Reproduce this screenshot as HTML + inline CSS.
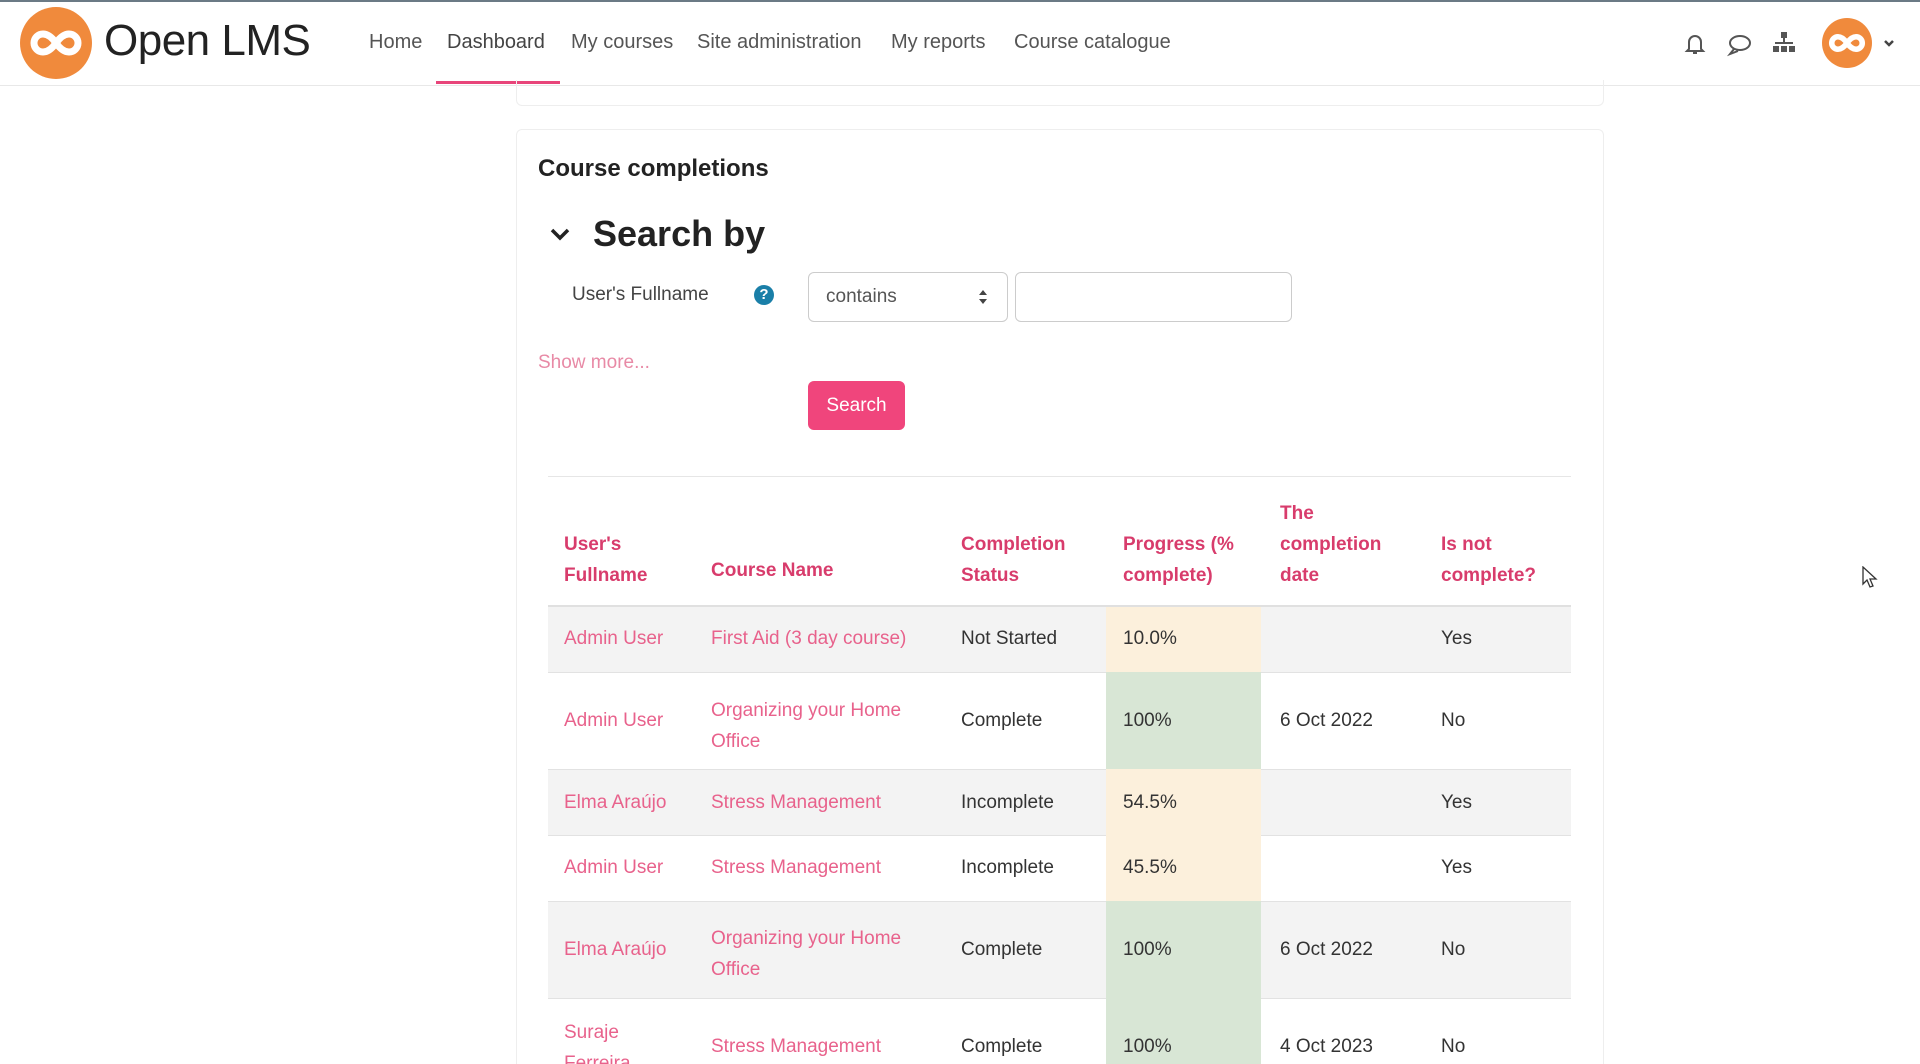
<!DOCTYPE html>
<html style="width:1920px;height:1064px;overflow:hidden"><head><meta charset="utf-8"><style>
*{margin:0;padding:0;box-sizing:border-box}
body{width:1920px;height:1064px;overflow:hidden;background:#fff;font-family:"Liberation Sans",sans-serif;color:#333;position:relative}
.a{position:absolute;white-space:nowrap}
.nav{position:absolute;left:0;top:0;width:1920px;height:86px;border-bottom:1px solid #e8e8e8;border-top:2px solid #6b7a85;background:#fff}
.nl{font-size:20px;color:#555;top:31px}
.l{color:#e8628c}
.h{color:#d83c6c;font-weight:bold;font-size:19px}
.c{font-size:19px}
.row{position:absolute;left:548px;width:1023px;border-top:1px solid #e2e2e2}
</style></head><body>
<div class="nav"></div>
<svg class="a" style="left:20px;top:7px" width="72" height="72" viewBox="0 0 72 72"><circle cx="36" cy="36" r="36" fill="#f08a3c"/><path d="M36 36c-5-7-9-9-13-9a9 9 0 0 0 0 18c4 0 8-2 13-9zm0 0c5 7 9 9 13 9a9 9 0 0 0 0-18c-4 0-8 2-13 9z" fill="none" stroke="#fff" stroke-width="7"/></svg>
<div class="a" style="left:104px;top:16px;font-size:44px;color:#222;letter-spacing:-0.5px">Open LMS</div>
<div class="a nl" style="left:369px">Home</div>
<div class="a nl" style="left:447px;color:#444">Dashboard</div>
<div class="a" style="left:436px;top:81px;width:124px;height:3px;background:#e8457a"></div>
<div class="a nl" style="left:571px">My courses</div>
<div class="a nl" style="left:697px">Site administration</div>
<div class="a nl" style="left:891px">My reports</div>
<div class="a nl" style="left:1014px">Course catalogue</div>
<svg class="a" style="left:1683px;top:32px" width="24" height="24" viewBox="0 0 24 24" fill="none" stroke="#555" stroke-width="2"><path d="M6 17V10a6 6 0 0 1 12 0v7l2 2H4z M10 21h4"/></svg>
<svg class="a" style="left:1726px;top:33px" width="26" height="24" viewBox="0 0 26 24" fill="none" stroke="#555" stroke-width="2"><ellipse cx="14" cy="10" rx="10" ry="7"/><path d="M8 16l-4 5 8-3"/></svg>
<svg class="a" style="left:1772px;top:32px" width="24" height="22" viewBox="0 0 24 22" fill="#555"><rect x="9" y="0" width="6" height="6"/><rect x="11" y="6" width="2" height="5"/><rect x="3" y="10" width="18" height="2"/><rect x="1" y="14" width="6" height="6"/><rect x="9" y="14" width="6" height="6"/><rect x="17" y="14" width="6" height="6"/></svg>
<svg class="a" style="left:1822px;top:18px" width="50" height="50" viewBox="0 0 72 72"><circle cx="36" cy="36" r="36" fill="#f08a3c"/><path d="M36 36c-5-7-9-9-13-9a9 9 0 0 0 0 18c4 0 8-2 13-9zm0 0c5 7 9 9 13 9a9 9 0 0 0 0-18c-4 0-8 2-13 9z" fill="none" stroke="#fff" stroke-width="8"/></svg>
<svg class="a" style="left:1883px;top:38px" width="12" height="10" viewBox="0 0 12 10"><path d="M2 3l4 4 4-4" fill="none" stroke="#444" stroke-width="2.5"/></svg>
<div class="a" style="left:516px;top:80px;width:1088px;height:26px;border:1px solid #eee;border-top:none;border-radius:0 0 6px 6px"></div>
<div class="a" style="left:516px;top:129px;width:1088px;height:935px;border:1px solid #eee;border-bottom:none;border-radius:6px 6px 0 0"></div>
<div class="a" style="left:538px;top:155px;font-size:24px;font-weight:bold;color:#222">Course completions</div>
<svg class="a" style="left:549px;top:226px" width="22" height="16" viewBox="0 0 22 16"><path d="M3 4l8 8 8-8" fill="none" stroke="#222" stroke-width="3.5"/></svg>
<div class="a" style="left:593px;top:213px;font-size:36px;font-weight:bold;color:#222">Search by</div>
<div class="a" style="left:572px;top:284px;font-size:19px;color:#444">User's Fullname</div>
<div class="a" style="left:754px;top:285px;width:20px;height:20px;border-radius:50%;background:#1a7fa8;color:#fff;font-size:15px;font-weight:bold;text-align:center;line-height:20px">?</div>
<div class="a" style="left:808px;top:272px;width:200px;height:50px;border:1px solid #ccc;border-radius:6px"></div>
<div class="a" style="left:826px;top:286px;font-size:19px;color:#555">contains</div>
<svg class="a" style="left:978px;top:289px" width="10" height="16" viewBox="0 0 10 16" fill="#444"><path d="M5 1l4 5H1zM5 15l4-5H1z"/></svg>
<div class="a" style="left:1015px;top:272px;width:277px;height:50px;border:1px solid #ccc;border-radius:6px"></div>
<div class="a l" style="left:538px;top:352px;font-size:19px;color:#e88aa6">Show more...</div>
<div class="a" style="left:808px;top:381px;width:97px;height:49px;background:#f0457c;border-radius:6px;color:#fff;font-size:19px;text-align:center;line-height:49px">Search</div>
<div class="a" style="left:548px;top:476px;width:1023px;height:1px;background:#e6e6e6"></div>
<div class="a h" style="left:564px;top:529px;line-height:31px">User's<br>Fullname</div>
<div class="a h" style="left:711px;top:560px">Course Name</div>
<div class="a h" style="left:961px;top:529px;line-height:31px">Completion<br>Status</div>
<div class="a h" style="left:1123px;top:529px;line-height:31px">Progress (%<br>complete)</div>
<div class="a h" style="left:1280px;top:498px;line-height:31px">The<br>completion<br>date</div>
<div class="a h" style="left:1441px;top:529px;line-height:31px">Is not<br>complete?</div>
<div class="row" style="top:605px;height:67px;background:#f3f3f3;border-top:2px solid #e0e0e0"></div>
<div class="row" style="top:672px;height:97px"></div>
<div class="row" style="top:769px;height:66px;background:#f3f3f3"></div>
<div class="row" style="top:835px;height:66px"></div>
<div class="row" style="top:901px;height:97px;background:#f3f3f3"></div>
<div class="row" style="top:998px;height:66px"></div>
<div class="a" style="left:1106px;top:607px;width:155px;height:65px;background:#fcf0dc"></div>
<div class="a" style="left:1106px;top:672px;width:155px;height:97px;background:#d8e6d5"></div>
<div class="a" style="left:1106px;top:769px;width:155px;height:66px;background:#fcf0dc"></div>
<div class="a" style="left:1106px;top:835px;width:155px;height:66px;background:#fcf0dc"></div>
<div class="a" style="left:1106px;top:901px;width:155px;height:163px;background:#d8e6d5"></div>
<div class="a c l" style="left:564px;top:628px">Admin User</div>
<div class="a c l" style="left:711px;top:628px">First Aid (3 day course)</div>
<div class="a c" style="left:961px;top:628px">Not Started</div>
<div class="a c" style="left:1123px;top:628px">10.0%</div>
<div class="a c" style="left:1441px;top:628px">Yes</div>
<div class="a c l" style="left:564px;top:710px">Admin User</div>
<div class="a c l" style="left:711px;top:695px;line-height:31px">Organizing your Home<br>Office</div>
<div class="a c" style="left:961px;top:710px">Complete</div>
<div class="a c" style="left:1123px;top:710px">100%</div>
<div class="a c" style="left:1280px;top:710px">6 Oct 2022</div>
<div class="a c" style="left:1441px;top:710px">No</div>
<div class="a c l" style="left:564px;top:792px">Elma Araújo</div>
<div class="a c l" style="left:711px;top:792px">Stress Management</div>
<div class="a c" style="left:961px;top:792px">Incomplete</div>
<div class="a c" style="left:1123px;top:792px">54.5%</div>
<div class="a c" style="left:1441px;top:792px">Yes</div>
<div class="a c l" style="left:564px;top:857px">Admin User</div>
<div class="a c l" style="left:711px;top:857px">Stress Management</div>
<div class="a c" style="left:961px;top:857px">Incomplete</div>
<div class="a c" style="left:1123px;top:857px">45.5%</div>
<div class="a c" style="left:1441px;top:857px">Yes</div>
<div class="a c l" style="left:564px;top:939px">Elma Araújo</div>
<div class="a c l" style="left:711px;top:923px;line-height:31px">Organizing your Home<br>Office</div>
<div class="a c" style="left:961px;top:939px">Complete</div>
<div class="a c" style="left:1123px;top:939px">100%</div>
<div class="a c" style="left:1280px;top:939px">6 Oct 2022</div>
<div class="a c" style="left:1441px;top:939px">No</div>
<div class="a c l" style="left:564px;top:1017px;line-height:31px;height:47px;overflow:hidden">Suraje<br>Ferreira</div>
<div class="a c l" style="left:711px;top:1036px">Stress Management</div>
<div class="a c" style="left:961px;top:1036px">Complete</div>
<div class="a c" style="left:1123px;top:1036px">100%</div>
<div class="a c" style="left:1280px;top:1036px">4 Oct 2023</div>
<div class="a c" style="left:1441px;top:1036px">No</div>
<svg class="a" style="left:1862px;top:566px" width="16" height="22" viewBox="0 0 16 22"><path d="M1 1v17l4-4 3 7 3-1-3-7h6z" fill="#fff" stroke="#333" stroke-width="1.3"/></svg>
</body></html>
